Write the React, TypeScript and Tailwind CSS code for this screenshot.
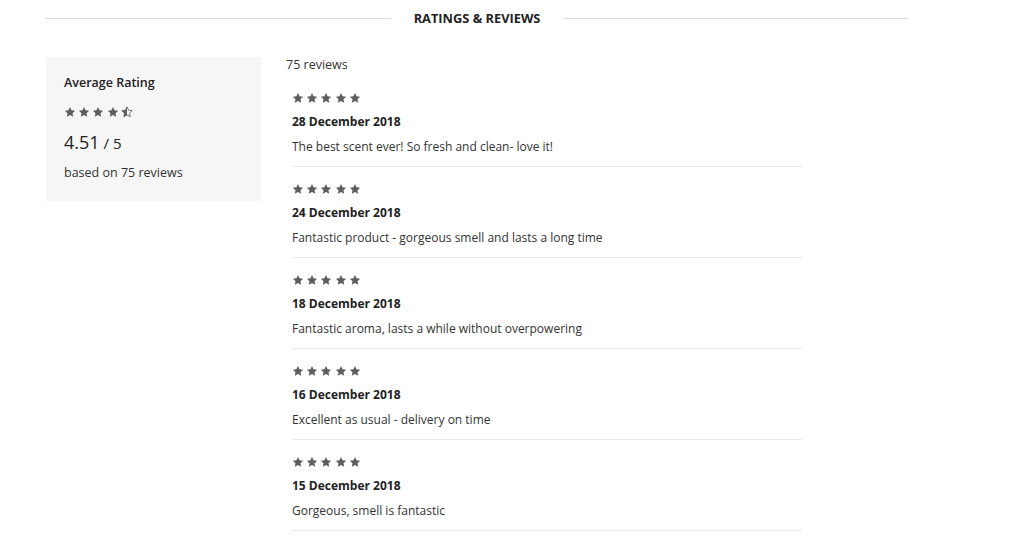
import React from "react";

const reviews = [
  { date: "28 December 2018", text: "The best scent ever! So fresh and clean- love it!" },
  { date: "24 December 2018", text: "Fantastic product - gorgeous smell and lasts a long time" },
  { date: "18 December 2018", text: "Fantastic aroma, lasts a while without overpowering" },
  { date: "16 December 2018", text: "Excellent as usual - delivery on time" },
  { date: "15 December 2018", text: "Gorgeous, smell is fantastic" },
];

const STAR = "M12 1.8l3.1 6.6 7.2.9-5.3 5 1.4 7.1L12 17.9l-6.4 3.5 1.4-7.1-5.3-5 7.2-.9z";

function Star({ half = false, id }: { half?: boolean; id?: string }) {
  if (!half) {
    return (
      <svg viewBox="0 0 24 24" className="w-[12px] h-[12px]">
        <path d={STAR} fill="#5e5e5e" />
      </svg>
    );
  }
  return (
    <svg viewBox="0 0 24 24" className="w-[12px] h-[12px]">
      <defs>
        <clipPath id={id}>
          <rect x="0" y="0" width="12" height="24" />
        </clipPath>
      </defs>
      <path d={STAR} fill="none" stroke="#5e5e5e" strokeWidth="1.7" strokeLinejoin="round" />
      <path d={STAR} fill="#5e5e5e" clipPath={`url(#${id})`} />
    </svg>
  );
}

function Stars({ half = false }: { half?: boolean }) {
  return (
    <div className="flex items-center gap-[2.2px] h-[11px]">
      <Star />
      <Star />
      <Star />
      <Star />
      {half ? <Star half id="half-star" /> : <Star />}
    </div>
  );
}

export default function App() {
  return (
    <div
      className="w-[1024px] h-[547px] bg-white text-[#333] overflow-hidden"
      style={{ fontFamily: '"Open Sans", "Noto Sans", sans-serif' }}
    >
      <div className="w-[862px] ml-[46px]">
        {/* section heading */}
        <div className="flex items-center h-[36px]">
          <div className="flex-1 h-px bg-[#dcdcdc]" />
          <h2 className="px-[23px] text-[12.8px] font-bold text-[#222] leading-[36px]">
            RATINGS &amp; REVIEWS
          </h2>
          <div className="flex-1 h-px bg-[#dcdcdc]" />
        </div>

        <div className="flex mt-[21px]">
          {/* summary */}
          <aside className="w-[215px] h-[144px] bg-[#f6f6f6] pl-[18px] pt-[17px] shrink-0">
            <div className="text-[12.5px] font-semibold text-[#222] leading-[18px]">Average Rating</div>
            <div className="mt-[14px]">
              <Stars half />
            </div>
            <div className="mt-[14px] leading-[22px] text-[#222]">
              <span className="text-[18px]">4.51</span>
              <span className="text-[15px]"> / 5</span>
            </div>
            <div className="mt-[10px] text-[12.5px] leading-[18px]">based on 75 reviews</div>
          </aside>

          {/* review list */}
          <section className="ml-[25px] w-[516px]">
            <div className="text-[12.5px] leading-[18px] -mt-[1px]">75 reviews</div>
            <ul className="ml-[6px] mt-[2px]">
              {reviews.map((r) => (
                <li key={r.date} className="pt-[16px] pb-[10px] border-b border-[#e9e9e9]">
                  <Stars />
                  <div className="mt-[10px] text-[12px] font-bold text-[#222] leading-[18px]">{r.date}</div>
                  <div className="mt-[7px] text-[12px] leading-[18px]">{r.text}</div>
                </li>
              ))}
            </ul>
          </section>
        </div>
      </div>
    </div>
  );
}
